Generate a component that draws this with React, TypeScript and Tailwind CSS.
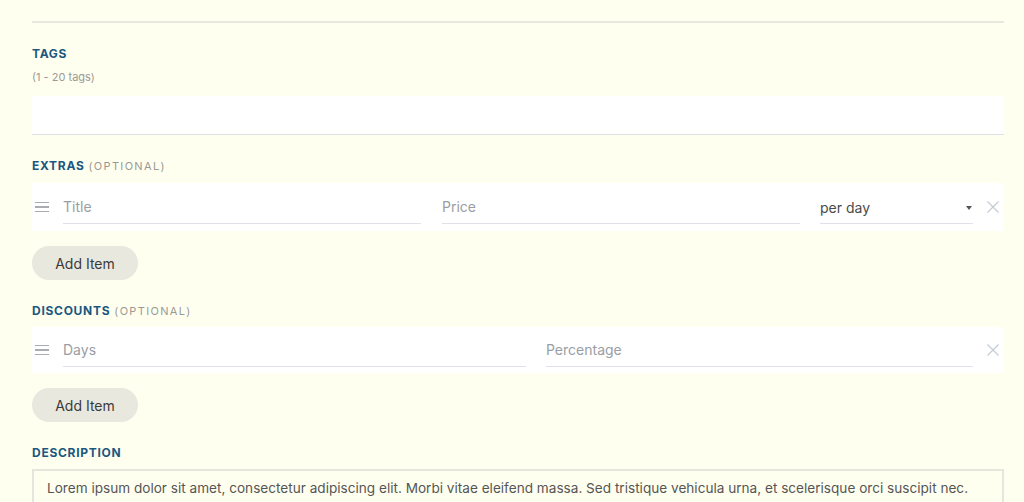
const font = { fontFamily: "Inter, 'Noto Sans', sans-serif" }

const Label = ({ title, optional }: { title: string; optional?: boolean }) => (
    <div className="text-[12px] leading-[16px] font-bold tracking-[0.06em] text-[#1a5880]">
        {title}
        {optional && <span className="ml-[4px] text-[11px] font-normal tracking-[0.12em] text-[#9a9a94]">(OPTIONAL)</span>}
    </div>
)

const Handle = () => (
    <div className="ml-[3px] mr-[14px] flex w-[14px] shrink-0 flex-col gap-[3px]">
        <span className="h-[1.5px] w-full bg-[#a9adb3]"></span>
        <span className="h-[1.5px] w-full bg-[#a9adb3]"></span>
        <span className="h-[1.5px] w-full bg-[#a9adb3]"></span>
    </div>
)

const Field = ({ placeholder, className }: { placeholder: string; className?: string }) => (
    <div className={`flex h-[34px] shrink-0 items-center border-b border-[#dfe2ea] text-[14px] text-[#999ea4] ${className ?? ""}`}>
        {placeholder}
    </div>
)

const Remove = () => (
    <svg className="ml-[14px] mr-[5px] shrink-0" width="12" height="12" viewBox="0 0 12 12" fill="none">
        <path d="M0.5 0.5L11.5 11.5M11.5 0.5L0.5 11.5" stroke="#c3cbd3" strokeWidth="1.2" />
    </svg>
)

const AddItem = () => (
    <button className="flex h-[34px] w-[106px] items-center justify-center rounded-full bg-[#e8e8df] text-[14px] text-[#3a3a3a]">
        Add Item
    </button>
)

export default function App() {
    return (
        <div style={font} className="h-[502px] w-full overflow-hidden bg-[#fffff0] pl-[32px] pr-[20px] pt-[21px]">
            <div className="h-[2px] w-full bg-[#e8e8e0]"></div>

            <div className="mt-[23px]">
                <Label title="TAGS" />
            </div>
            <div className="mt-[8px] text-[11px] leading-[14px] text-[#9a9a94]">(1 - 20 tags)</div>
            <div className="mt-[12px] h-[39px] border-b border-[#dfe1e6] bg-white"></div>

            <div className="mt-[23px]">
                <Label title="EXTRAS" optional />
            </div>
            <div className="mt-[9px] flex h-[48px] items-center bg-white">
                <Handle />
                <Field placeholder="Title" className="w-[358px]" />
                <Field placeholder="Price" className="ml-[21px] w-[358px]" />
                <div className="ml-[20px] flex h-[34px] w-[153px] shrink-0 items-center justify-between border-b border-[#dfe2ea] pt-[2px] text-[14px] text-[#4a4a4a]">
                    per day
                    <span className="mr-[1px] h-0 w-0 border-x-[3.5px] border-t-[4px] border-x-transparent border-t-[#555]"></span>
                </div>
                <Remove />
            </div>
            <div className="mt-[15px]">
                <AddItem />
            </div>

            <div className="mt-[23px]">
                <Label title="DISCOUNTS" optional />
            </div>
            <div className="mt-[8px] flex h-[46px] items-center bg-white">
                <Handle />
                <Field placeholder="Days" className="w-[463px]" />
                <Field placeholder="Percentage" className="ml-[20px] w-[427px]" />
                <Remove />
            </div>
            <div className="mt-[15px]">
                <AddItem />
            </div>

            <div className="mt-[23px]">
                <Label title="DESCRIPTION" />
            </div>
            <div className="mt-[8px] border-2 border-[#e6e6df] bg-[#fffff0] px-[13px] pb-[20px] pt-[7px] text-[13.6px] leading-[20px] text-[#555]">
                Lorem ipsum dolor sit amet, consectetur adipiscing elit. Morbi vitae eleifend massa. Sed tristique vehicula urna, et scelerisque orci suscipit nec.
            </div>
        </div>
    )
}
